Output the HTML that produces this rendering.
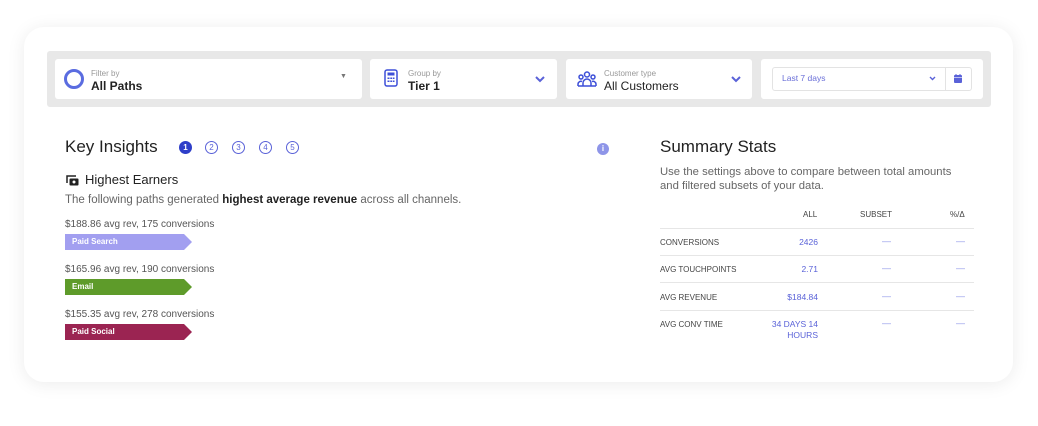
<!DOCTYPE html>
<html><head><meta charset="utf-8"><style>
*{box-sizing:border-box;margin:0;padding:0}
body{width:1038px;height:426px;background:#fff;font-family:"Liberation Sans",sans-serif;position:relative;overflow:hidden;color:#333}
.card{position:absolute;left:24px;top:27px;width:989px;height:355px;background:#fff;border-radius:20px;box-shadow:0 2px 18px rgba(0,0,0,0.08)}
.bar{position:absolute;left:47px;top:51px;width:944px;height:56px;background:#e8e8e8;border-radius:3px}
.box{position:absolute;top:59px;height:40px;background:#fff;border-radius:3px}
.lbl{position:absolute;font-size:8px;color:#999}
.val{position:absolute;font-size:12px;color:#222;font-weight:bold}
.chev{position:absolute;color:#5a62d8;font-size:10px}
.t{position:absolute;white-space:nowrap}
.num{position:absolute;top:141px;width:13px;height:13px;border-radius:50%;border:1px solid #5a62d8;color:#5a62d8;font-size:8px;text-align:center;line-height:11px}
.tag{position:absolute;left:65px;width:127px;height:16px;color:#fff;font-size:8px;font-weight:bold;padding-left:7px;line-height:16px;clip-path:polygon(0 0,119px 0,127px 8px,119px 16px,0 16px)}
.row{position:absolute;left:660px;width:314px;height:1px;background:#e6e6e6}
.sl{position:absolute;left:660px;font-size:8px;color:#444}
.sv{position:absolute;font-size:8.5px;color:#5a62d8;text-align:right}
</style></head><body>
<div class="card"></div>
<div class="bar"></div>
<div class="box" style="left:55px;width:307px"></div>
<div class="box" style="left:370px;width:187px"></div>
<div class="box" style="left:566px;width:186px"></div>
<div class="box" style="left:761px;width:222px"></div>
<div style="position:absolute;left:64px;top:69px;width:20px;height:20px;border-radius:50%;border:3px solid #5a6ce0"></div>
<div class="lbl" style="left:91px;top:69px">Filter by</div>
<div class="val" style="left:91px;top:79px">All Paths</div>
<div class="t" style="left:340px;top:73px;font-size:7px;color:#777">▼</div>
<svg style="position:absolute;left:384px;top:69px" width="14" height="18" viewBox="0 0 14 18"><rect x="1" y="1" width="12" height="16" rx="2" fill="none" stroke="#3d4fd8" stroke-width="1.5"/><rect x="3.5" y="3.5" width="7" height="3" fill="#3d4fd8"/><g fill="#3d4fd8"><rect x="3.5" y="8.5" width="2" height="1.5"/><rect x="6.3" y="8.5" width="2" height="1.5"/><rect x="9" y="8.5" width="1.5" height="1.5"/><rect x="3.5" y="11.5" width="2" height="1.5"/><rect x="6.3" y="11.5" width="2" height="1.5"/><rect x="9" y="11.5" width="1.5" height="1.5"/></g></svg>
<div class="lbl" style="left:408px;top:69px">Group by</div>
<div class="val" style="left:408px;top:79px">Tier 1</div>
<svg class="chev" style="left:535px;top:76px" width="10" height="7" viewBox="0 0 10 7"><path d="M1 1l4 4 4-4" fill="none" stroke="#5a62d8" stroke-width="2"/></svg>
<svg style="position:absolute;left:577px;top:71px" width="20" height="16" viewBox="0 0 20 16"><g fill="none" stroke="#3d4fd8" stroke-width="1.5"><circle cx="10" cy="3.5" r="2.5"/><circle cx="4" cy="6" r="2"/><circle cx="16" cy="6" r="2"/><path d="M6 15v-3a4 4 0 0 1 8 0v3zM1 15v-2a3 3 0 0 1 4-2.5M19 15v-2a3 3 0 0 0-4-2.5M1 15h18"/></g></svg>
<div class="lbl" style="left:604px;top:69px">Customer type</div>
<div class="val" style="left:604px;top:79px;font-weight:normal">All Customers</div>
<svg class="chev" style="left:731px;top:76px" width="10" height="7" viewBox="0 0 10 7"><path d="M1 1l4 4 4-4" fill="none" stroke="#5a62d8" stroke-width="2"/></svg>
<div style="position:absolute;left:772px;top:67px;width:200px;height:24px;border:1px solid #e3e3e3;border-radius:3px"></div>
<div style="position:absolute;left:945px;top:67px;width:1px;height:24px;background:#e3e3e3"></div>
<div class="t" style="left:782px;top:73px;font-size:8.5px;color:#6a6fd8">Last 7 days</div>
<svg style="position:absolute;left:929px;top:76px" width="7" height="5" viewBox="0 0 7 5"><path d="M1 1l2.5 2.5L6 1" fill="none" stroke="#5a62d8" stroke-width="1.4"/></svg>
<svg style="position:absolute;left:954px;top:74px" width="8" height="9" viewBox="0 0 8 9"><rect x="0" y="1" width="8" height="8" rx="1" fill="#5a62d8"/><rect x="1.5" y="0" width="1" height="2" fill="#5a62d8"/><rect x="5.5" y="0" width="1" height="2" fill="#5a62d8"/><path d="M0 3.5h8" stroke="#fff" stroke-width=".6"/></svg>

<div class="t" style="left:65px;top:137px;font-size:17px;color:#222">Key Insights</div>
<div class="num" style="left:179px;background:#2f3fc9;border-color:#2f3fc9;color:#fff;font-weight:bold">1</div>
<div class="num" style="left:205px">2</div>
<div class="num" style="left:232px">3</div>
<div class="num" style="left:259px">4</div>
<div class="num" style="left:286px">5</div>
<div style="position:absolute;left:597px;top:143px;width:12px;height:12px;border-radius:50%;background:#8e95e8;color:#fff;font-size:8px;font-weight:bold;text-align:center;line-height:12px">i</div>
<svg style="position:absolute;left:66px;top:175px" width="13" height="11" viewBox="0 0 13 11"><path d="M1 8V1h9" fill="none" stroke="#222" stroke-width="1.5"/><rect x="3.5" y="3.5" width="9" height="7" rx="1" fill="#222"/><circle cx="8" cy="7" r="1.5" fill="#fff"/></svg>
<div class="t" style="left:85px;top:172px;font-size:13px;color:#222">Highest Earners</div>
<div class="t" style="left:65px;top:194px;font-size:11.5px;color:#666">The following paths generated <b style="color:#222">highest average revenue</b> across all channels.</div>
<div class="t" style="left:65px;top:219px;font-size:10px;color:#555">$188.86 avg rev, 175 conversions</div>
<div class="tag" style="top:234px;background:#a29ff0">Paid Search</div>
<div class="t" style="left:65px;top:264px;font-size:10px;color:#555">$165.96 avg rev, 190 conversions</div>
<div class="tag" style="top:279px;background:#5e9b2a">Email</div>
<div class="t" style="left:65px;top:309px;font-size:10px;color:#555">$155.35 avg rev, 278 conversions</div>
<div class="tag" style="top:324px;background:#9b2452">Paid Social</div>

<div class="t" style="left:660px;top:137px;font-size:17px;color:#222">Summary Stats</div>
<div class="t" style="left:660px;top:165px;font-size:11.3px;color:#666;line-height:14px;white-space:normal;width:310px">Use the settings above to compare between total amounts and filtered subsets of your data.</div>
<div class="t" style="left:803px;top:210px;font-size:8px;color:#444">ALL</div>
<div class="t" style="left:860px;top:210px;font-size:8px;color:#444">SUBSET</div>
<div class="t" style="left:950px;top:210px;font-size:8px;color:#444">%/Δ</div>
<div class="row" style="top:228px"></div>
<div class="row" style="top:255px"></div>
<div class="row" style="top:282px"></div>
<div class="row" style="top:310px"></div>
<div class="sl" style="top:238px">CONVERSIONS</div>
<div class="sl" style="top:265px">AVG TOUCHPOINTS</div>
<div class="sl" style="top:293px">AVG REVENUE</div>
<div class="sl" style="top:320px">AVG CONV TIME</div>
<div class="sv" style="left:760px;width:58px;top:237px">2426</div>
<div class="sv" style="left:760px;width:58px;top:264px">2.71</div>
<div class="sv" style="left:760px;width:58px;top:292px">$184.84</div>
<div class="sv" style="left:760px;width:58px;top:319px;line-height:11px">34 DAYS 14<br>HOURS</div>
<div class="t" style="left:882px;top:236px;color:#8e95e8;font-size:9px">—</div>
<div class="t" style="left:956px;top:236px;color:#8e95e8;font-size:9px">—</div>
<div class="t" style="left:882px;top:263px;color:#8e95e8;font-size:9px">—</div>
<div class="t" style="left:956px;top:263px;color:#8e95e8;font-size:9px">—</div>
<div class="t" style="left:882px;top:291px;color:#8e95e8;font-size:9px">—</div>
<div class="t" style="left:956px;top:291px;color:#8e95e8;font-size:9px">—</div>
<div class="t" style="left:882px;top:318px;color:#8e95e8;font-size:9px">—</div>
<div class="t" style="left:956px;top:318px;color:#8e95e8;font-size:9px">—</div>
</body></html>
